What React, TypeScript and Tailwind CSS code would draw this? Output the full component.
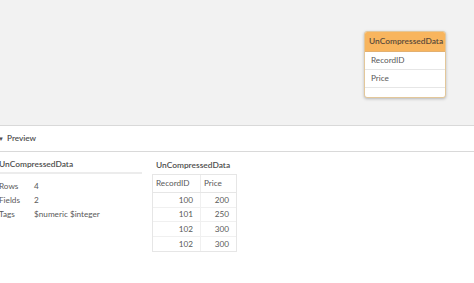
import React from "react";

export default function App() {
  const rows = [
    ["100", "200"],
    ["101", "250"],
    ["102", "300"],
    ["102", "300"],
  ];
  return (
    <div
      className="w-[474px] h-[283px] bg-white overflow-hidden text-[#595959]"
      style={{ fontFamily: "Lato, 'Open Sans', sans-serif" }}
    >
      <div className="h-[126px] bg-[#f2f2f2] border-b border-[#d9d9d9] flex justify-end pt-[31px] pr-[28px]">
        <div className="w-[82px] h-[67px] bg-white rounded-[3px] border border-[#e3c79a] shadow-[0_1px_3px_rgba(0,0,0,0.25)] flex flex-col overflow-hidden">
          <div className="h-[20px] bg-[#f8b55e] text-[#5a4a3a] text-[8.4px] font-semibold flex items-center pl-[4px] border-b border-[#e3b070] whitespace-nowrap">
            UnCompressedData
          </div>
          <div className="h-[18px] text-[8.2px] flex items-center pl-[6px] border-b border-[#e6e6e6]">RecordID</div>
          <div className="h-[18px] text-[8.2px] flex items-center pl-[6px] border-b border-[#e6e6e6]">Price</div>
        </div>
      </div>
      <div className="h-[26px] border-b border-[#d9d9d9] flex items-center text-[8.2px] font-semibold gap-[3px] text-[#4d4d4d]">
        <span className="text-[6px] leading-none -ml-[2px]">▼</span>
        <span>Preview</span>
      </div>
      <div className="flex pt-[5px]">
        <div className="w-[143px] -ml-[1px]">
          <div className="h-[17px] border-b-2 border-[#ececec] text-[8.4px] font-semibold flex items-center text-[#4d4d4d]">
            UnCompressedData
          </div>
          <div className="mt-[5px] text-[8.2px] grid grid-cols-[35px_1fr] leading-[14px]">
            <span>Rows</span><span>4</span>
            <span>Fields</span><span>2</span>
            <span>Tags</span><span>$numeric $integer</span>
          </div>
        </div>
        <div className="ml-[10px] w-[85px]">
          <div className="h-[17px] text-[8.4px] font-semibold flex items-center pl-[4px] text-[#4d4d4d]">
            UnCompressedData
          </div>
          <div className="border border-[#e6e6e6] text-[8.2px]">
            <div className="flex h-[18px] items-center border-b border-[#e6e6e6]">
              <div className="w-[48px] pl-[3px] border-r border-[#ececec] h-full flex items-center">RecordID</div>
              <div className="flex-1 pl-[3px]">Price</div>
            </div>
            {rows.map((r, i) => (
              <div key={i} className="flex h-[14.5px] items-center border-b border-[#f0f0f0] last:border-b-0">
                <div className="w-[48px] pr-[7px] text-right border-r border-[#f0f0f0] h-full flex items-center justify-end">{r[0]}</div>
                <div className="flex-1 pr-[7px] text-right">{r[1]}</div>
              </div>
            ))}
          </div>
        </div>
      </div>
    </div>
  );
}
